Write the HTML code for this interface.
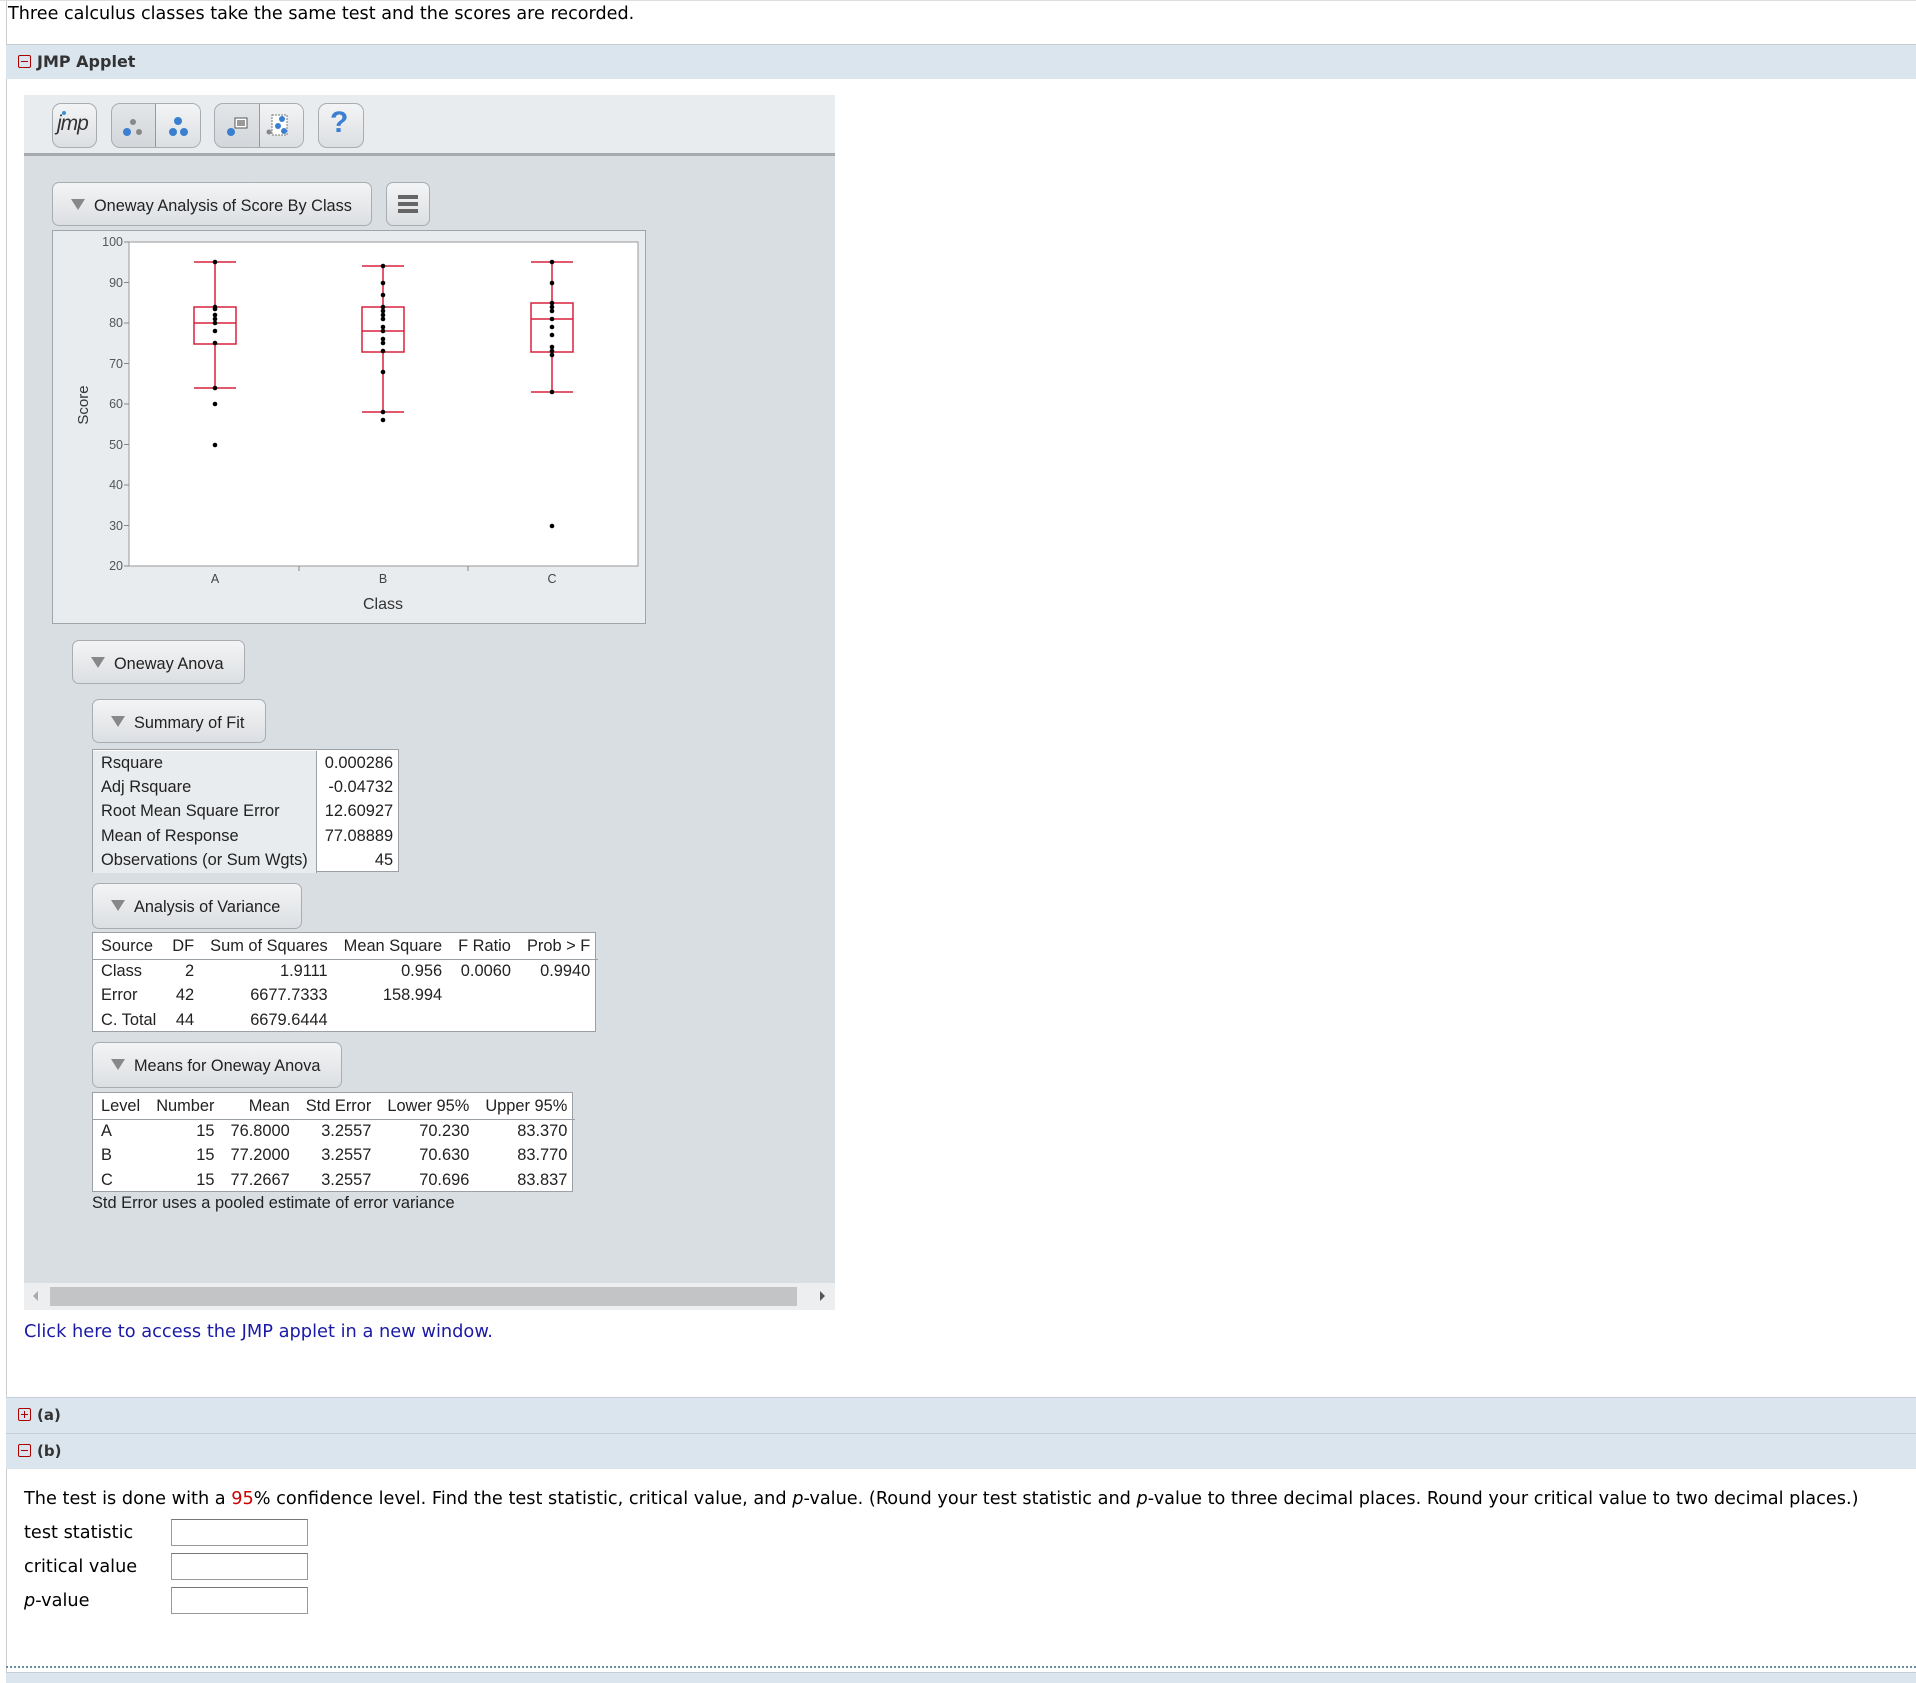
<!DOCTYPE html>
<html><head><meta charset="utf-8"><style>
*{margin:0;padding:0;box-sizing:border-box}
body{width:1916px;height:1683px;position:relative;background:#fff;font-family:"DejaVu Sans",Verdana,sans-serif;font-size:17.6px;color:#000;overflow:hidden}
.a{position:absolute}
.j{font-family:"Liberation Sans",Arial,sans-serif;color:#222}
.band{position:absolute;left:6px;right:0;background:#dbe5ee;border-top:1px solid #c5ced6}
.btn{position:absolute;border:1px solid #a8adb2;border-radius:7px;background:linear-gradient(#f3f4f5,#dcdfe2);}
.tri{display:inline-block;width:0;height:0;border-left:7px solid transparent;border-right:7px solid transparent;border-top:11px solid #888;margin-right:9px;vertical-align:1px}
.hb{font-family:"Liberation Sans",Arial,sans-serif;font-size:16.3px;color:#222;padding-left:18px;line-height:46px}
table{border-collapse:collapse;font-family:"Liberation Sans",Arial,sans-serif;font-size:16.4px;color:#222}
td{padding:0 8px;height:24.4px;white-space:nowrap}
.tb{position:absolute;border:1px solid #9aa0a5;background:#fff}
.r{text-align:right}
.pm{display:inline-block;width:13px;height:13px;border:1.5px solid #a00;border-radius:2px;position:relative;vertical-align:-1px;margin-right:6px}
.pm:before{content:"";position:absolute;left:2px;right:2px;top:4.5px;height:1.5px;background:#a00}
.pl:after{content:"";position:absolute;top:2px;bottom:2px;left:4.5px;width:1.5px;background:#a00}
.inp{position:absolute;left:171px;width:137px;height:27px;border:1px solid #999;border-top-color:#777}
</style></head><body>
<div class="a" style="left:6px;top:0;width:1px;height:1683px;background:#ccc"></div>
<div class="a" style="left:0;top:0;width:1916px;height:1px;background:#ddd"></div>
<div class="a" style="left:8px;top:4px">Three calculus classes take the same test and the scores are recorded.</div>

<div class="band" style="top:44px;height:35px"></div>
<div class="a" style="left:18px;top:52px;font-weight:bold;font-size:16px;color:#333"><span class="pm"></span>JMP Applet</div>

<!-- applet -->
<div class="a" style="left:24px;top:95px;width:811px;height:1214px;background:#d9dee2"></div>
<div class="a" style="left:24px;top:95px;width:811px;height:61px;background:#e9ecee;border-bottom:3px solid #a7abaf"></div>
<div class="btn" style="left:52px;top:103px;width:45px;height:45px;border-radius:9px"></div>
<div class="a" style="left:57px;top:112px;font-family:'Liberation Sans',sans-serif;font-style:italic;font-size:21px;color:#333;letter-spacing:-1px">jmp</div>
<div class="a" style="left:62px;top:111px;width:4px;height:4px;background:#3a8fd8;border-radius:2px"></div>
<div class="btn" style="left:111px;top:103px;width:90px;height:45px;border-radius:9px;background:linear-gradient(#e3e6e9,#d3d7da)"></div>
<div class="a" style="left:155px;top:104px;width:1px;height:43px;background:#999"></div>
<div class="a" style="left:156px;top:104px;width:44px;height:43px;background:linear-gradient(#f3f4f5,#dcdfe2);border-radius:0 8px 8px 0"></div>
<svg class="a" style="left:111px;top:103px" width="90" height="45"><circle cx="22" cy="19" r="3" fill="#888"/><circle cx="16" cy="29" r="4" fill="#3b7fd0"/><circle cx="28" cy="29" r="3" fill="#888"/><circle cx="67" cy="18" r="4" fill="#3b7fd0"/><circle cx="62" cy="29" r="4" fill="#3b7fd0"/><circle cx="73" cy="29" r="4" fill="#3b7fd0"/></svg>
<div class="btn" style="left:214px;top:103px;width:90px;height:45px;border-radius:9px;background:linear-gradient(#e3e6e9,#d3d7da)"></div>
<div class="a" style="left:259px;top:104px;width:1px;height:43px;background:#999"></div>
<div class="a" style="left:260px;top:104px;width:43px;height:43px;background:linear-gradient(#f3f4f5,#dcdfe2);border-radius:0 8px 8px 0"></div>
<svg class="a" style="left:214px;top:103px" width="90" height="45"><circle cx="17" cy="29" r="4" fill="#3b7fd0"/><rect x="21" y="15" width="12" height="10" fill="#fff" stroke="#555"/><path d="M23 18h8M23 20h8M23 22h8" stroke="#333"/><rect x="58" y="12" width="15" height="20" fill="#fff" stroke="#777" stroke-dasharray="2 1"/><circle cx="68" cy="16" r="3" fill="#3b7fd0"/><circle cx="64" cy="23" r="3" fill="#3b7fd0"/><circle cx="70" cy="28" r="3" fill="#3b7fd0"/><circle cx="55" cy="29" r="2.5" fill="#888"/></svg>
<div class="btn" style="left:318px;top:103px;width:46px;height:45px;border-radius:9px"></div>
<div class="a" style="left:330px;top:106px;font-family:'Liberation Sans',sans-serif;font-weight:bold;font-size:30px;color:#3b7fd0">?</div>

<div class="btn" style="left:52px;top:182px;width:320px;height:44px"><div class="hb" style="line-height:46px"><span class="tri"></span>Oneway Analysis of Score By Class</div></div>
<div class="btn" style="left:386px;top:182px;width:44px;height:44px"></div>
<div class="a" style="left:398px;top:195px;width:20px;height:4px;background:#666;box-shadow:0 7px 0 #666,0 14px 0 #666"></div>

<!-- chart -->
<svg class="a" style="left:52px;top:230px" width="594" height="394" font-family="Liberation Sans,Arial,sans-serif">
<rect x="0.5" y="0.5" width="593" height="393" fill="#e9ecee" stroke="#a0a5aa"/>
<rect x="77" y="12" width="509" height="324" fill="#fff" stroke="#999"/>
<g font-size="12.5" fill="#555" text-anchor="end">
<text x="71" y="16">100</text><text x="71" y="57">90</text><text x="71" y="97">80</text><text x="71" y="138">70</text><text x="71" y="178">60</text><text x="71" y="219">50</text><text x="71" y="259">40</text><text x="71" y="300">30</text><text x="71" y="340">20</text>
</g>
<path d="M72 12h5M72 52.5h5M72 93h5M72 133.5h5M72 174h5M72 214.5h5M72 255h5M72 295.5h5M72 336h5M247 336v5M416 336v5" stroke="#888"/>
<g font-size="12.5" fill="#444" text-anchor="middle"><text x="163" y="353">A</text><text x="331" y="353">B</text><text x="500" y="353">C</text></g>
<text x="331" y="379" font-size="16" fill="#333" text-anchor="middle">Class</text>
<text transform="translate(36,175) rotate(-90)" font-size="15" fill="#333" text-anchor="middle">Score</text>
<g stroke="#d8203c" stroke-width="1.5" fill="none">
<path d="M142 32h42M163 32v45M142 158h42M163 158v-44"/><rect x="142" y="77" width="42" height="37"/><path d="M142 93h42"/>
<path d="M310 36h42M331 36v41M310 182h42M331 182v-60"/><rect x="310" y="77" width="42" height="45"/><path d="M310 101h42"/>
<path d="M479 32h42M500 32v41M479 162h42M500 162v-40"/><rect x="479" y="73" width="42" height="49"/><path d="M479 89h42"/>
</g>
<g fill="#000">
<circle cx="163" cy="32" r="2.3"/><circle cx="163" cy="77" r="2.3"/><circle cx="163" cy="79" r="2.3"/><circle cx="163" cy="85" r="2.3"/><circle cx="163" cy="89" r="2.3"/><circle cx="163" cy="93" r="2.3"/><circle cx="163" cy="101" r="2.3"/><circle cx="163" cy="113" r="2.3"/><circle cx="163" cy="158" r="2.3"/><circle cx="163" cy="174" r="2.3"/><circle cx="163" cy="215" r="2.3"/>
<circle cx="331" cy="36" r="2.3"/><circle cx="331" cy="53" r="2.3"/><circle cx="331" cy="65" r="2.3"/><circle cx="331" cy="77" r="2.3"/><circle cx="331" cy="81" r="2.3"/><circle cx="331" cy="85" r="2.3"/><circle cx="331" cy="89" r="2.3"/><circle cx="331" cy="97" r="2.3"/><circle cx="331" cy="101" r="2.3"/><circle cx="331" cy="109" r="2.3"/><circle cx="331" cy="113" r="2.3"/><circle cx="331" cy="121" r="2.3"/><circle cx="331" cy="142" r="2.3"/><circle cx="331" cy="182" r="2.3"/><circle cx="331" cy="190" r="2.3"/>
<circle cx="500" cy="32" r="2.3"/><circle cx="500" cy="53" r="2.3"/><circle cx="500" cy="73" r="2.3"/><circle cx="500" cy="77" r="2.3"/><circle cx="500" cy="81" r="2.3"/><circle cx="500" cy="89" r="2.3"/><circle cx="500" cy="97" r="2.3"/><circle cx="500" cy="105" r="2.3"/><circle cx="500" cy="117" r="2.3"/><circle cx="500" cy="121" r="2.3"/><circle cx="500" cy="125" r="2.3"/><circle cx="500" cy="162" r="2.3"/><circle cx="500" cy="296" r="2.3"/>
</g>
</svg>

<div class="btn" style="left:72px;top:640px;width:173px;height:44px"><div class="hb"><span class="tri"></span>Oneway Anova</div></div>
<div class="btn" style="left:92px;top:699px;width:174px;height:44px"><div class="hb"><span class="tri"></span>Summary of Fit</div></div>
<div class="tb" style="left:92px;top:749px;width:307px;height:123px">
<table style="margin-top:1px;width:305px"><tr><td style="width:221px;background:#e9ecee;border-right:1px solid #9aa0a5">Rsquare</td><td class="r">0.000286</td></tr>
<tr><td style="background:#e9ecee;border-right:1px solid #9aa0a5">Adj Rsquare</td><td class="r">-0.04732</td></tr><tr><td style="background:#e9ecee;border-right:1px solid #9aa0a5">Root Mean Square Error</td><td class="r">12.60927</td></tr><tr><td style="background:#e9ecee;border-right:1px solid #9aa0a5">Mean of Response</td><td class="r">77.08889</td></tr><tr><td style="background:#e9ecee;border-right:1px solid #9aa0a5">Observations (or Sum Wgts)</td><td class="r">45</td></tr></table>
</div>

<div class="btn" style="left:92px;top:883px;width:210px;height:46px"><div class="hb"><span class="tri"></span>Analysis of Variance</div></div>
<div class="tb" style="left:92px;top:932px;width:504px;height:100px">
<table style="margin-top:2px;width:502px"><tr style="border-bottom:1px solid #9aa0a5"><td>Source</td><td class="r">DF</td><td class="r">Sum of Squares</td><td class="r">Mean Square</td><td class="r">F Ratio</td><td class="r">Prob &gt; F</td></tr>
<tr><td>Class</td><td class="r">2</td><td class="r">1.9111</td><td class="r">0.956</td><td class="r">0.0060</td><td class="r">0.9940</td></tr>
<tr><td>Error</td><td class="r">42</td><td class="r">6677.7333</td><td class="r">158.994</td><td></td><td></td></tr>
<tr><td>C. Total</td><td class="r">44</td><td class="r">6679.6444</td><td></td><td></td><td></td></tr></table></div>

<div class="btn" style="left:92px;top:1042px;width:250px;height:46px"><div class="hb"><span class="tri"></span>Means for Oneway Anova</div></div>
<div class="tb" style="left:92px;top:1092px;width:481px;height:100px">
<table style="margin-top:2px;width:479px"><tr style="border-bottom:1px solid #9aa0a5"><td>Level</td><td class="r">Number</td><td class="r">Mean</td><td class="r">Std Error</td><td class="r">Lower 95%</td><td class="r">Upper 95%</td></tr>
<tr><td>A</td><td class="r">15</td><td class="r">76.8000</td><td class="r">3.2557</td><td class="r">70.230</td><td class="r">83.370</td></tr>
<tr><td>B</td><td class="r">15</td><td class="r">77.2000</td><td class="r">3.2557</td><td class="r">70.630</td><td class="r">83.770</td></tr>
<tr><td>C</td><td class="r">15</td><td class="r">77.2667</td><td class="r">3.2557</td><td class="r">70.696</td><td class="r">83.837</td></tr></table></div>
<div class="a j" style="left:92px;top:1194px;font-size:16.4px">Std Error uses a pooled estimate of error variance</div>

<div class="a" style="left:24px;top:1283px;width:811px;height:27px;background:#eceef0"></div>
<div class="a" style="left:50px;top:1287px;width:747px;height:19px;background:#c2c4c6"></div>
<div class="a" style="left:33px;top:1291px;width:0;height:0;border-top:5px solid transparent;border-bottom:5px solid transparent;border-right:5px solid #aaa"></div>
<div class="a" style="left:820px;top:1291px;width:0;height:0;border-top:5px solid transparent;border-bottom:5px solid transparent;border-left:5px solid #555"></div>

<div class="a" style="left:24px;top:1321px;color:#1a1aa6;font-size:17.8px">Click here to access the JMP applet in a new window.</div>

<div class="band" style="top:1397px;height:36px"></div>
<div class="a" style="left:18px;top:1406px;font-weight:bold;font-size:15px;color:#333"><span class="pm pl"></span>(a)</div>
<div class="band" style="top:1433px;height:36px"></div>
<div class="a" style="left:18px;top:1442px;font-weight:bold;font-size:15px;color:#333"><span class="pm"></span>(b)</div>

<div class="a" style="left:24px;top:1489px;font-size:17.7px;white-space:nowrap">The test is done with a <span style="color:#c00">95</span>% confidence level. Find the test statistic, critical value, and <i>p</i>-value. (Round your test statistic and <i>p</i>-value to three decimal places. Round your critical value to two decimal places.)</div>
<div class="a" style="left:24px;top:1523px;font-size:17.7px">test statistic</div>
<div class="a" style="left:24px;top:1557px;font-size:17.7px">critical value</div>
<div class="a" style="left:24px;top:1591px;font-size:17.7px"><i>p</i>-value</div>
<div class="inp" style="top:1519px"></div>
<div class="inp" style="top:1553px"></div>
<div class="inp" style="top:1587px"></div>

<div class="a" style="left:6px;right:0;top:1666px;height:0;border-top:2px dotted #6a8ca0"></div>
<div class="a" style="left:6px;right:0;top:1672px;height:11px;background:#dbe5ee;border-top:1px solid #c5ced6"></div>
</body></html>
